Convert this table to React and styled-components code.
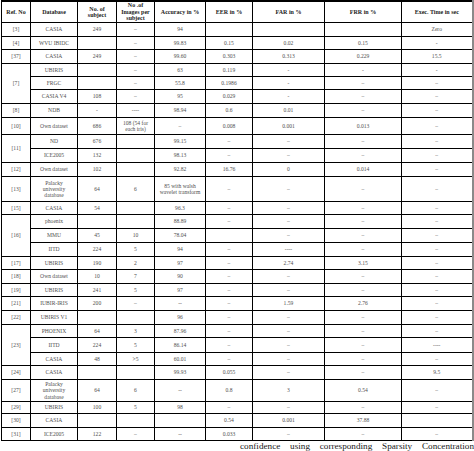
import React from "react";
import styled, { createGlobalStyle } from "styled-components";

const GlobalStyle = createGlobalStyle`
  html, body {
    margin: 0;
    padding: 0;
    background: #fff;
  }
  body {
    font-family: "Liberation Serif", "Times New Roman", serif;
  }
`;

const widths = [29, 47, 39, 38, 51, 47, 72, 77, 71];

const header = [
  "Ref. No",
  "Database",
  "No. of subject",
  "No .of Images per subject",
  "Accuracy in  %",
  "EER in %",
  "FAR in %",
  "FRR in %",
  "Exec. Time in sec",
];

// ref, span (0 = covered by the row above), then the 8 data cells, then height
const rows = [
  ["[3]", 1, "CASIA", "249", "–", "94", "", "", "", "Zero", 14],
  ["[4]", 1, "WVU IBIDC", "", "–", "99.83", "0.15", "0.02", "0.15", "-", 13],
  ["[37]", 1, "CASIA", "249", "–", "99.60", "0.303", "0.313", "0.229", "15.5", 14],
  ["[7]", 3, "UBIRIS", "", "–", "63", "0.119", "-", "-", "-", 13],
  [null, 0, "FRGC", "", "–", "55.8", "0.1986", "-", "–", "–", 13],
  [null, 0, "CASIA V4", "108", "–", "95", "0.029", "-", "–", "–", 14],
  ["[8]", 1, "NDB", "-", "----", "98.94", "0.6", "0.01", "–", "–", 14],
  ["[10]", 1, "Own dataset", "686", "108 (54 for each iris)", "–", "0.008", "0.001", "0.013", "–", 17],
  ["[11]", 2, "ND", "676", "", "99.15", "–", "–", "–", "–", 14],
  [null, 0, "ICE2005", "132", "", "98.13", "–", "–", "–", "–", 14],
  ["[12]", 1, "Own dataset", "102", "", "92.82", "16.76", "0", "0.014", "–", 14],
  ["[13]", 1, "Palacky university database", "64", "6", "85 with walsh wavelet transform", "–", "–", "–", "–", 25],
  ["[15]", 1, "CASIA", "54", "", "96.3", "–", "–", "–", "–", 13],
  ["[16]", 3, "phoenix", "", "", "88.89", "–", "–", "–", "–", 14],
  [null, 0, "MMU", "45", "10", "78.04", "", "–", "–", "–", 14],
  [null, 0, "IITD", "224", "5", "94", "–", "----", "–", "–", 14],
  ["[17]", 1, "UBIRIS", "190", "2", "97", "–", "2.74", "3.15", "–", 13],
  ["[18]", 1, "Own dataset", "10", "7", "90", "–", "–", "–", "–", 14],
  ["[19]", 1, "UBIRIS", "241", "5", "97", "–", "–", "–", "–", 13],
  ["[21]", 1, "IUBIR-IRIS", "200", "–", "--", "–", "1.59", "2.76", "–", 14],
  ["[22]", 1, "UBIRIS V1", "", "", "96", "–", "–", "–", "–", 14],
  ["[23]", 3, "PHOENIX", "64", "3", "87.96", "–", "–", "–", "–", 13],
  [null, 0, "IITD", "224", "5", "86.14", "–", "–", "–", "----", 15],
  [null, 0, "CASIA", "48", ">5", "60.01", "–", "–", "–", "–", 13],
  ["[24]", 1, "CASIA", "", "", "99.93", "0.055", "–", "–", "9.5", 14],
  ["[27]", 1, "Palacky university database", "64", "6", "--", "0.8", "3", "0.54", "–", 22],
  ["[29]", 1, "UBIRIS", "100", "5", "98", "–", "–", "–", "–", 12],
  ["[30]", 1, "CASIA", "", "", "", "0.54", "0.001", "37.88", "", 14],
  ["[31]", 1, "ICE2005", "122", "–", "--", "0.033", "–", "–", "–", 13],
];

const Page = styled.div`
  width: 474px;
  height: 451px;
  overflow: hidden;
  background: #fff;
`;

const Table = styled.table`
  margin-left: 1px;
  width: 471px;
  table-layout: fixed;
  border-collapse: collapse;
  border-top: 2px solid #000;
  border-left: 1px solid #cfcfcf;
  border-right: 2px solid #8a8a8a;
`;

const HeadCell = styled.th`
  border: 1.5px solid #000;
  padding: 0 4px;
  height: 20px;
  font-size: 6px;
  line-height: 6.4px;
  font-weight: bold;
  color: #222;
  text-align: center;
  vertical-align: middle;
`;

const Cell = styled.td`
  border: 1.5px solid #000;
  padding: 0 3px;
  font-size: 5.6px;
  line-height: 6.3px;
  color: #505050;
  text-align: center;
  vertical-align: middle;
  background: #fff;
`;

const Row = styled.tr`
  height: ${(p) => p.$h}px;
`;

const Caption = styled.p`
  margin: 1px 0 0 240px;
  width: 234px;
  font-size: 9.2px;
  line-height: 9px;
  color: #1a1a1a;
  white-space: nowrap;
  display: flex;
  justify-content: space-between;
`;

const App = () => {
  return (
    <Page>
      <GlobalStyle />
      <Table>
        <colgroup>
          {widths.map((w, i) => (
            <col key={i} style={{ width: w }} />
          ))}
        </colgroup>
        <thead>
          <tr>
            {header.map((h) => (
              <HeadCell key={h}>{h}</HeadCell>
            ))}
          </tr>
        </thead>
        <tbody>
          {rows.map((r, i) => {
            const [ref, span, ...rest] = r;
            const h = rest.pop();
            return (
              <Row key={i} $h={h}>
                {span > 0 && <Cell rowSpan={span}>{ref}</Cell>}
                {rest.map((c, j) => (
                  <Cell key={j}>{c}</Cell>
                ))}
              </Row>
            );
          })}
        </tbody>
      </Table>
      <Caption>
        {"confidence using corresponding Sparsity Concentration"
          .split(" ")
          .map((w) => (
            <span key={w}>{w}</span>
          ))}
      </Caption>
    </Page>
  );
};

export default App;
